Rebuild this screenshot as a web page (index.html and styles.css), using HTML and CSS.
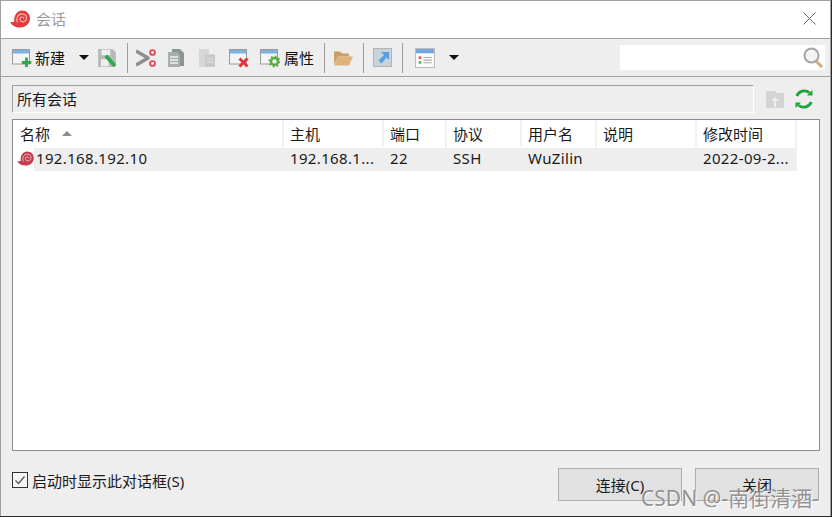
FILE: index.html
```html
<!DOCTYPE html>
<html lang="en">

<head>
    <meta charset="UTF-8">
    <title>会话</title>
    <link rel="stylesheet" href="styles.css">
</head>

<body>
    <svg class="defs" width="0" height="0">
        <defs>
            <symbol id="snail" viewBox="0 0 20 18">
                <path d="M0 12c1.700.6 3.200.4 4.300-.4C3.600 5.500 7 .500 12 .500c4.600 0 8 3.400 8 7.800 0 5.300-4.400 9.200-9.800 9.200C5.500 17.500 1.500 15.500 0 12z" fill="currentColor"/>
                <path d="M7.500 12.500C5.800 9 7.500 3.800 12 3.800c3 0 5 2.200 4.600 4.800-.4 3-4.200 4.300-6 2.300-1.300-1.400-.6-3.700 1.300-3.900 1.200-.1 2 .8 1.800 1.700" fill="none" stroke="#fff" stroke-width="1.200" opacity=".6"/>
            </symbol>
            <symbol id="win" viewBox="0 0 20 18">
                <rect x=".5" y=".5" width="17" height="14.500" fill="#f4f4f4" stroke="#9a9a9a"/>
                <rect x="1" y="1" width="16" height="3.500" fill="#7fb2e0"/>
            </symbol>
        </defs>
    </svg>

    <div class="window">
        <div class="titlebar">
            <svg class="title-logo"><use href="#snail"/></svg>
            <span class="title-text">会话</span>
            <svg class="close" viewBox="0 0 13 13"><path d="M.5.500l12 12M12.500.500l-12 12" stroke="#6a6a6a" fill="none"/></svg>
        </div>

        <div class="toolbar">
            <svg class="ico first" viewBox="0 0 20 18"><use href="#win" width="20" height="18"/><path d="M14.500 8.500v9.500M9.800 13.500h9.500" stroke="#2fa84f" stroke-width="2.800"/></svg>
            <span class="tool-label">新建</span>
            <span class="caret new-caret"></span>
            <svg class="ico save" viewBox="0 0 18 18"><path d="M1 1h13l3 3v13H1z" fill="#b4b9ba"/><rect x="4" y="1.500" width="8" height="5" fill="#eee"/><rect x="3.500" y="10" width="7" height="6.500" fill="#eee"/><path d="M8 7l8 9" stroke="#2fa84f" stroke-width="3.400"/></svg>
            <i class="sep"></i>
            <svg class="ico cut" viewBox="0 0 20 20"><path d="M0 3l13 7.500M0 17l13-7.500" stroke="#8f8f8f" stroke-width="3.600"/><circle cx="16.500" cy="4.500" r="2.400" fill="#fff" stroke="#e04a55" stroke-width="1.900"/><circle cx="16.500" cy="15.500" r="2.400" fill="#fff" stroke="#e04a55" stroke-width="1.900"/></svg>
            <svg class="ico copy" viewBox="0 0 18 20"><path d="M5 1h8l4 4v13H5z" fill="#8e9496"/><path d="M1 4h9l3 3v12H1z" fill="#a9aeaf"/><path d="M3 9h8M3 12h8M3 15h8" stroke="#eee" stroke-width="1.300"/></svg>
            <svg class="ico paste" viewBox="0 0 18 20"><path d="M1 1h10v5h5v13H1z" fill="#d6d6d6"/><path d="M7 7h10v12H7z" fill="#c9c9c9"/><path d="M9 11h6M9 14h6" stroke="#e2e2e2"/></svg>
            <svg class="ico del" viewBox="0 0 20 18"><use href="#win" width="20" height="18"/><path d="M10.500 9.500l8 8M18.500 9.500l-8 8" stroke="#e0303c" stroke-width="2.800"/></svg>
            <svg class="ico prop" viewBox="0 0 20 18"><use href="#win" width="20" height="18"/><circle cx="14.500" cy="12.500" r="3.500" fill="none" stroke="#55ad3d" stroke-width="2.400"/><circle cx="14.500" cy="12.500" r="5.300" fill="none" stroke="#55ad3d" stroke-width="1.500" stroke-dasharray="1.800 2.300"/></svg>
            <span class="tool-label prop-label">属性</span>
            <i class="sep"></i>
            <svg class="ico folder" viewBox="0 0 20 17"><path d="M1 2h6l2 2h7v3H5L1 15z" fill="#c99f68"/><path d="M5 7h15l-4 9H1z" fill="#dfb37c"/></svg>
            <i class="sep"></i>
            <svg class="ico link" viewBox="0 0 19 19"><rect x=".5" y=".5" width="18" height="18" fill="#c9d3dc" stroke="#b2b2b2"/><path d="M8 4h8v8l-2.500-2.500-5 6-3-3 5.500-5.500z" fill="#5a9fdf"/></svg>
            <i class="sep"></i>
            <svg class="ico view" viewBox="0 0 19 19"><rect x=".5" y=".5" width="18" height="18" fill="#fafafa" stroke="#bcbcbc"/><rect x="1" y="1" width="17" height="4" fill="#6ea6dc"/><rect x="3.500" y="8" width="2.500" height="2.500" fill="#e25555"/><rect x="3.500" y="12.500" width="2.500" height="2.500" fill="#4fb55b"/><path d="M8 9h8M8 11.500h8M8 14h8" stroke="#aaa"/></svg>
            <span class="caret view-caret"></span>
            <div class="search">
                <svg class="search-ico" viewBox="0 0 21 21"><path d="M13 14l6 6" stroke="#d8a878" stroke-width="3"/><circle cx="8.500" cy="8.500" r="7" fill="#f4f4f4" stroke="#a6a6a6" stroke-width="2"/></svg>
            </div>
        </div>

        <div class="content">
            <div class="pathrow">
                <div class="path">所有会话</div>
                <svg class="upload" viewBox="0 0 18 18"><path d="M0 1h9l2 2h7v15H0z" fill="#d4d4d4"/><path d="M9 7l-4 4h3v6h2v-6h3z" fill="#eee"/></svg>
                <svg class="refresh" viewBox="0 0 20 20"><path d="M2.800 7A8 8 0 0 1 15.500 3.800M17.200 13A8 8 0 0 1 4.500 16.200" fill="none" stroke="#22a33a" stroke-width="2.800"/><path d="M13 6.500h5.500V1zM7 13.500H1.500V19z" fill="#22a33a"/></svg>
            </div>

            <div class="list">
                <div class="cols head">
                    <div class="col sort">名称<span class="sort-arrow"></span></div>
                    <div class="col">主机</div>
                    <div class="col">端口</div>
                    <div class="col">协议</div>
                    <div class="col">用户名</div>
                    <div class="col">说明</div>
                    <div class="col">修改时间</div>
                </div>
                <div class="row-wrap">
                    <svg class="row-logo"><use href="#snail"/></svg>
                    <div class="cols row">
                        <div class="cell name">192.168.192.10</div>
                        <div class="cell">192.168.1...</div>
                        <div class="cell">22</div>
                        <div class="cell">SSH</div>
                        <div class="cell">WuZilin</div>
                        <div class="cell"></div>
                        <div class="cell">2022-09-2...</div>
                    </div>
                </div>
            </div>

            <div class="footer">
                <label class="check">
                    <span class="box"><svg viewBox="0 0 14 14"><path d="M2.500 7.500l3 3 6-7" fill="none" stroke="#555" stroke-width="1.200"/></svg></span>
                    启动时显示此对话框(S)
                </label>
                <div class="buttons">
                    <div class="btn">连接(C)</div>
                    <div class="btn">关闭</div>
                </div>
            </div>
        </div>
    </div>

    <div class="watermark">CSDN @-南街清酒-</div>
</body>

</html>
```

FILE: styles.css
```css
* {
    box-sizing: border-box;
}

html,
body {
    margin: 0;
    height: 517px;
    overflow: hidden;
}

body {
    font-family: "Noto Sans", "Noto Sans CJK SC", sans-serif;
    font-size: 15px;
    color: #1a1a1a;
    background-color: #2b2b2b;
    position: relative;
}

.defs {
    position: absolute;
}

.window {
    width: 831px;
    height: 516px;
    border: 1px solid #a0a0a0;
    border-bottom: 0;
    background-color: #eeeeee;
    display: flex;
    flex-direction: column;
}

.titlebar {
    height: 38px;
    flex: none;
    background: #ffffff;
    border-bottom: 1px solid #a0a0a0;
    display: flex;
    align-items: center;
    padding: 0 14px 2px 9px;
}

.title-logo {
    width: 20px;
    height: 18px;
    color: #e23b3b;
}

.title-text {
    margin-left: 6px;
    color: #9b9b9b;
    font-size: 15px;
}

.close {
    width: 13px;
    height: 13px;
    margin-left: auto;
}

.toolbar {
    height: 38px;
    flex: none;
    border-bottom: 1px solid #a0a0a0;
    display: flex;
    align-items: center;
    padding-left: 11px;
}

.ico {
    flex: none;
    width: 20px;
    height: 20px;
}

.tool-label {
    color: #111;
    margin-left: 3px;
    line-height: 20px;
}

.caret {
    flex: none;
    width: 0;
    height: 0;
    border-left: 5px solid transparent;
    border-right: 5px solid transparent;
    border-top: 5px solid #111;
}

.new-caret {
    margin-left: 14px;
}

.save {
    width: 20px;
    height: 20px;
    margin-left: 8px;
}

.sep {
    flex: none;
    width: 1px;
    height: 30px;
    background: #9c9c9c;
    margin: 0 8px 0 10px;
}

.copy,
.paste {
    width: 18px;
    margin-left: 11px;
}

.paste {
    margin-left: 13px;
}

.del {
    margin-left: 13px;
}

.prop {
    margin-left: 11px;
}

.prop-label {
    margin-left: 4px;
}

.folder {
    width: 20px;
}

.link {
    width: 19px;
    height: 19px;
    margin-left: 1px;
}

.view {
    width: 20px;
    height: 20px;
    margin-left: 4px;
}

.view-caret {
    margin-left: 14px;
}

.search {
    margin-left: auto;
    margin-right: 5px;
    width: 205px;
    height: 25px;
    background: #ffffff;
    display: flex;
    align-items: center;
    justify-content: flex-end;
}

.search-ico {
    width: 21px;
    height: 21px;
    margin-right: 1px;
}

.content {
    flex: 1;
    min-height: 0;
    padding: 8px 10px 0 11px;
    display: flex;
    flex-direction: column;
}

.pathrow {
    display: flex;
    align-items: center;
    height: 28px;
}

.path {
    width: 742px;
    height: 28px;
    border: 1px solid #ffffff;
    border-top-color: #a0a0a0;
    border-left-color: #a0a0a0;
    padding-left: 4px;
    line-height: 26px;
}

.upload {
    width: 18px;
    height: 18px;
    margin-left: 12px;
}

.refresh {
    width: 20px;
    height: 20px;
    margin-left: 10px;
}

.list {
    margin-top: 6px;
    height: 332px;
    flex: none;
    border: 1px solid #8a8a96;
    background: #ffffff;
}

.cols {
    display: grid;
    grid-template-columns: 271px 100px 63px 75px 75px 100px 100px;
}

.head {
    height: 28px;
}

.col {
    height: 27px;
    line-height: 28px;
    padding-left: 6px;
    border-right: 2px solid #f0f0f0;
}

.sort {
    display: flex;
    align-items: center;
    padding-left: 7px;
}

.sort-arrow {
    width: 0;
    height: 0;
    margin-left: 12px;
    border-left: 5px solid transparent;
    border-right: 5px solid transparent;
    border-bottom: 5px solid #8c8c8c;
}

.row-wrap {
    position: relative;
}

.row-logo {
    position: absolute;
    left: 4px;
    top: 3px;
    width: 17px;
    height: 15px;
    color: #c23f50;
}

.row {
    height: 23px;
    line-height: 21px;
    letter-spacing: 0.35px;
    background: linear-gradient(#eeeeee, #eeeeee) 21px 0 / 763px 100% no-repeat;
}

.cell {
    padding-left: 6px;
    white-space: nowrap;
    overflow: hidden;
}

.name {
    padding-left: 23px;
}

.footer {
    flex: 1;
    display: flex;
    justify-content: space-between;
    padding-top: 17px;
}

.check {
    display: flex;
    align-items: center;
    gap: 4px;
    height: 24px;
    font-size: 15px;
}

.box {
    width: 16px;
    height: 16px;
    border: 1px solid #333;
    background: #f6f6f6;
    display: flex;
}

.buttons {
    display: flex;
    gap: 13px;
    margin-right: 1px;
}

.btn {
    width: 124px;
    height: 33px;
    line-height: 32px;
    text-align: center;
    background: #e1e1e1;
    border: 1px solid #adadad;
}

.watermark {
    position: absolute;
    left: 641px;
    top: 485px;
    font-size: 21px;
    line-height: 26px;
    color: rgba(130, 130, 130, 0.85);
    text-shadow: 1px 1px 0 rgba(255, 255, 255, 0.8);
    white-space: nowrap;
}
```
